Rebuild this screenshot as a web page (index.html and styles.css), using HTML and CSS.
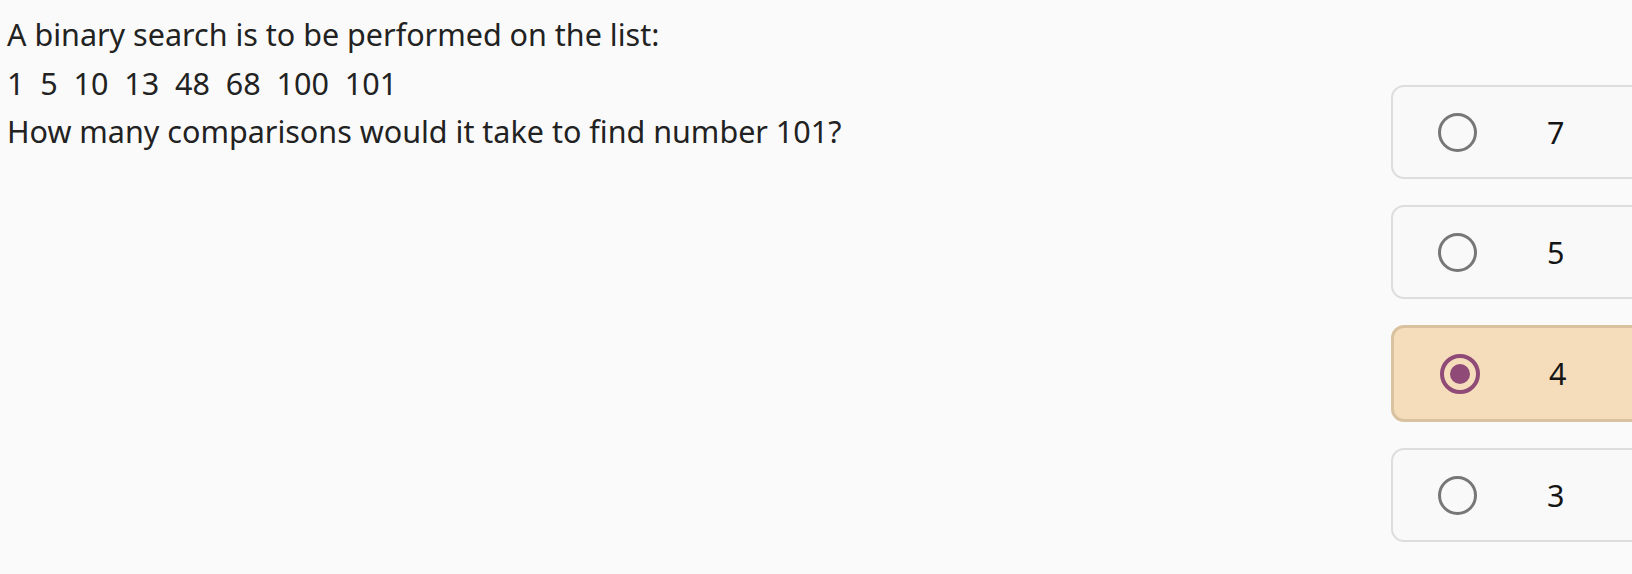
FILE: index.html
```html
<!DOCTYPE html>
<html lang="en">
<head>
<meta charset="utf-8">
<title>Binary search question</title>
<link rel="stylesheet" href="styles.css">
</head>
<body>
<main class="quiz">
  <section class="question">
    <p class="line">A binary search is to be performed on the list:</p>
    <p class="line">1&nbsp; 5&nbsp; 10&nbsp; 13&nbsp; 48&nbsp; 68&nbsp; 100&nbsp; 101</p>
    <p class="line">How many comparisons would it take to find number 101?</p>
  </section>
  <section class="options">
    <label class="option"><span class="radio"></span><span class="value">7</span></label>
    <label class="option"><span class="radio"></span><span class="value">5</span></label>
    <label class="option selected"><span class="radio"><span class="dot"></span></span><span class="value">4</span></label>
    <label class="option"><span class="radio"></span><span class="value">3</span></label>
  </section>
</main>
</body>
</html>
```
FILE: styles.css
```css
html, body {
  margin: 0;
  padding: 0;
  background: #fafafa;
  overflow: hidden;
}

body {
  font-family: "Noto Sans", "Open Sans", sans-serif;
  color: #222;
}

.quiz {
  display: flex;
  width: 1760px;
}

.question {
  flex: 1;
  padding: 10px 0 0 7px;
}

.line {
  margin: 0;
  font-size: 30.5px;
  line-height: 48.5px;
  white-space: pre;
}

.options {
  flex: 0 0 369px;
  display: flex;
  flex-direction: column;
  gap: 26px;
  padding-top: 85px;
}

.option {
  box-sizing: border-box;
  height: 94px;
  display: flex;
  align-items: center;
  padding-left: 45px;
  border: 2px solid #dddddd;
  border-radius: 13px;
  background: #f9f9f9;
}

.option.selected {
  height: 97px;
  border: 3px solid #d8c2a0;
  padding-left: 46px;
  background: #f5ddbb;
}

.radio {
  box-sizing: border-box;
  width: 39px;
  height: 39px;
  border: 3.5px solid #777777;
  border-radius: 50%;
  display: flex;
  align-items: center;
  justify-content: center;
  flex-shrink: 0;
}

.selected .radio {
  width: 40px;
  height: 40px;
  border: 4px solid #8f4a77;
}

.dot {
  width: 20px;
  height: 20px;
  border-radius: 50%;
  background: #8f4a77;
}

.value {
  margin-left: 70px;
  font-size: 30.5px;
  color: #151515;
  line-height: 1;
}

.selected .value {
  margin-left: 69px;
}
```
